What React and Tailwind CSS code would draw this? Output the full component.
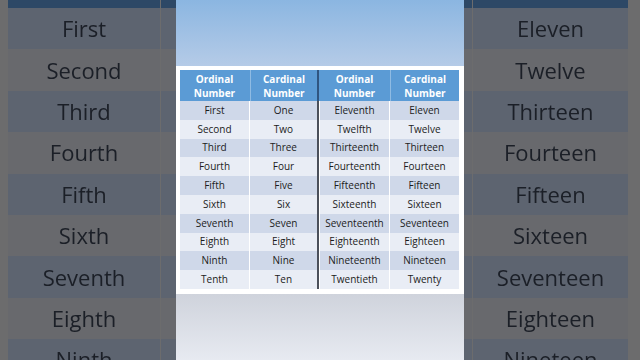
import React from "react";

const leftWords = ["First", "Second", "Third", "Fourth", "Fifth", "Sixth", "Seventh", "Eighth", "Ninth"];
const rightWords = ["Eleven", "Twelve", "Thirteen", "Fourteen", "Fifteen", "Sixteen", "Seventeen", "Eighteen", "Nineteen"];

const rows = [
  ["First", "One", "Eleventh", "Eleven"],
  ["Second", "Two", "Twelfth", "Twelve"],
  ["Third", "Three", "Thirteenth", "Thirteen"],
  ["Fourth", "Four", "Fourteenth", "Fourteen"],
  ["Fifth", "Five", "Fifteenth", "Fifteen"],
  ["Sixth", "Six", "Sixteenth", "Sixteen"],
  ["Seventh", "Seven", "Seventeenth", "Seventeen"],
  ["Eighth", "Eight", "Eighteenth", "Eighteen"],
  ["Ninth", "Nine", "Nineteenth", "Nineteen"],
  ["Tenth", "Ten", "Twentieth", "Twenty"],
];

function LeftSide() {
  return (
    <div className="flex w-[176px] shrink-0 flex-col overflow-hidden bg-[#6c6c6d] blur-[0.5px]">
      <div className="flex h-[8px] shrink-0">
        <div className="w-[8px] shrink-0" />
        <div className="w-[152px] bg-[#2d4866]" />
        <div className="ml-px flex-1 bg-[#2d4866]" />
      </div>
      {leftWords.map((t, i) => (
        <div key={t} className="flex h-[41.4px] shrink-0">
          <div className="w-[8px] shrink-0" />
          <div
            className={
              "flex w-[152px] shrink-0 items-center justify-center text-[22px] text-[#1b1f27] " +
              (i % 2 === 0 ? "bg-[#5d6470]" : "bg-[#68696d]")
            }
          >
            {t}
          </div>
          <div className={"ml-px flex-1 " + (i % 2 === 0 ? "bg-[#5d6470]" : "bg-[#68696d]")} />
        </div>
      ))}
    </div>
  );
}

function RightSide() {
  return (
    <div className="flex w-[176px] shrink-0 flex-col overflow-hidden bg-[#6c6c6d] blur-[0.5px]">
      <div className="flex h-[8px] shrink-0">
        <div className="w-[8px] shrink-0 bg-[#2d4866]" />
        <div className="ml-px w-[155px] bg-[#2d4866]" />
      </div>
      {rightWords.map((t, i) => (
        <div key={t} className="flex h-[41.4px] shrink-0">
          <div className={"w-[8px] shrink-0 " + (i % 2 === 0 ? "bg-[#5d6470]" : "bg-[#68696d]")} />
          <div
            className={
              "ml-px flex w-[155px] shrink-0 items-center justify-center text-[22px] text-[#1b1f27] " +
              (i % 2 === 0 ? "bg-[#5d6470]" : "bg-[#68696d]")
            }
          >
            {t}
          </div>
        </div>
      ))}
    </div>
  );
}

function TableRow({ cells, shade }) {
  const bg = shade ? "bg-[#cfd8e9]" : "bg-[#e9edf5]";
  return (
    <div className="flex h-[18.8px] shrink-0 text-[10px] text-[#1c1c1c]">
      <div className={"flex w-[69px] items-center justify-center " + bg}>{cells[0]}</div>
      <div className={"ml-px flex w-[67px] items-center justify-center " + bg}>{cells[1]}</div>
      <div className="w-[2px] bg-[#4b505a]" />
      <div className={"ml-px flex w-[69px] items-center justify-center " + bg}>{cells[2]}</div>
      <div className={"ml-px flex w-[69px] items-center justify-center " + bg}>{cells[3]}</div>
    </div>
  );
}

export default function App() {
  return (
    <div className="flex h-[360px] w-[640px] overflow-hidden bg-[#6c6c6d] font-['Open_Sans',sans-serif]">
      <LeftSide />
      <div className="flex w-[288px] shrink-0 flex-col">
        <div className="h-[66px] shrink-0 bg-linear-to-b from-[#8bb6e1] to-[#b5cbe7]" />
        <div className="shrink-0 bg-white pb-[5px] pl-[4px] pr-[5px] pt-[4px]">
          <div className="flex h-[31px] bg-[#5b9bd5] text-[10px] font-bold leading-[14px] text-white">
            <div className="flex w-[69px] flex-col items-center justify-center">
              <span>Ordinal</span>
              <span>Number</span>
            </div>
            <div className="ml-px flex w-[67px] flex-col items-center justify-center border-l border-[#8fbbe3]">
              <span>Cardinal</span>
              <span>Number</span>
            </div>
            <div className="w-[2px] bg-[#2f5580]" />
            <div className="ml-px flex w-[69px] flex-col items-center justify-center">
              <span>Ordinal</span>
              <span>Number</span>
            </div>
            <div className="ml-px flex w-[69px] flex-col items-center justify-center border-l border-[#8fbbe3]">
              <span>Cardinal</span>
              <span>Number</span>
            </div>
          </div>
          {rows.map((r, i) => (
            <TableRow key={r[0]} cells={r} shade={i % 2 === 0} />
          ))}
        </div>
        <div className="flex-1 bg-linear-to-b from-[#cfd3dc] to-[#e7eaf1]" />
      </div>
      <RightSide />
    </div>
  );
}
